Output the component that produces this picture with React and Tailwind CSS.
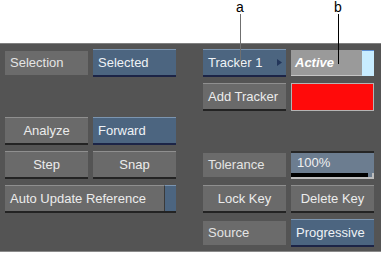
const font = { fontFamily: '"Liberation Sans", Arial, sans-serif' };

function Label({ children, className = "" }) {
  return (
    <div
      className={`my-[2px] flex items-center bg-[#6b6b6b] pl-[5px] text-[13px] text-[#e4e4e4] ${className}`}
    >
      {children}
    </div>
  );
}

function GrayBtn({ children, center = true, className = "" }) {
  return (
    <div
      className={`flex items-center border-t border-t-[#8f8f8f] border-b-2 border-b-[#232323] bg-[#6a6a6a] text-[13px] text-[#ececec] ${
        center ? "justify-center" : "pl-[5px]"
      } ${className}`}
    >
      {children}
    </div>
  );
}

function BlueBtn({ children, className = "" }) {
  return (
    <div
      className={`flex items-center border-t border-t-[#7c95b0] border-b-2 border-b-[#1c2446] bg-[#4c6580] pl-[5px] text-[13px] text-[#eef2f6] ${className}`}
    >
      {children}
    </div>
  );
}

export default function App() {
  return (
    <div className="relative h-[253px] w-[381px] overflow-hidden bg-white" style={font}>
      {/* callouts */}
      <div className="absolute left-[236px] top-0 text-[14px] leading-[14px] text-black">a</div>
      <div className="absolute left-[240px] top-[14px] z-10 h-[53px] w-px bg-[#6f6f6f]" />
      <div className="absolute left-[334px] top-0 text-[14px] leading-[14px] text-black">b</div>
      <div className="absolute left-[338px] top-[14px] z-10 h-[50px] w-px bg-black" />

      <div className="h-[43px]" />
      <div className="flex h-[209px] gap-[27px] border-t border-t-[#808080] border-b border-b-[#8a8a8a] bg-[#545454] pl-[5px] pt-[5px]">
        {/* left column */}
        <div className="grid grid-cols-[83px_83px] grid-rows-[repeat(6,28px)] gap-x-[5px] gap-y-[6px]">
          <Label>Selection</Label>
          <BlueBtn>Selected</BlueBtn>
          <div className="col-span-2" />
          <GrayBtn>Analyze</GrayBtn>
          <BlueBtn>Forward</BlueBtn>
          <GrayBtn>Step</GrayBtn>
          <GrayBtn>Snap</GrayBtn>
          <div className="col-span-2 flex border-b-2 border-b-[#232323]">
            <div className="flex flex-1 items-center border-t border-t-[#8f8f8f] bg-[#6a6a6a] pl-[5px] text-[13px] text-[#ececec]">
              Auto Update Reference
            </div>
            <div className="w-[12px] border-t border-t-[#7c95b0] border-l border-l-[#3a3a3a] bg-[#4c6580]" />
          </div>
        </div>

        {/* right column */}
        <div className="grid grid-cols-[83px_83px] grid-rows-[repeat(6,28px)] gap-x-[5px] gap-y-[6px]">
          <BlueBtn className="justify-between pr-[4px]">
            <span>Tracker 1</span>
            <svg width="5" height="7" viewBox="0 0 5 7">
              <path d="M0 0 L5 3.5 L0 7 Z" fill="#23365a" />
            </svg>
          </BlueBtn>
          <div className="my-[1px] flex">
            <div className="flex flex-1 items-center border-b border-b-[#c4c4c4] bg-[#9a9a9a] pl-[4px] text-[13px] font-bold italic text-white">
              Active
            </div>
            <div className="w-[12px] border-t border-t-[#5d8fd3] bg-[#c8ecff]" />
          </div>
          <GrayBtn center={false}>Add Tracker</GrayBtn>
          <div className="border border-[#b4b4b4] bg-[#ff0a0a]" />
          <div className="col-span-2" />
          <Label>Tolerance</Label>
          <div className="flex flex-col border-t-2 border-t-[#262626] bg-[#6c7d90]">
            <div className="flex flex-1 items-center pl-[6px] text-[13px] text-[#f0f0f0]">100%</div>
            <div className="flex h-[8px] border-b-2 border-b-[#bdbdbd]">
              <div className="flex-1 bg-black" />
              <div className="w-[6px] bg-[#6c7d90] border-r-2 border-r-[#bdbdbd]" />
            </div>
          </div>
          <GrayBtn>Lock Key</GrayBtn>
          <GrayBtn>Delete Key</GrayBtn>
          <Label>Source</Label>
          <BlueBtn>Progressive</BlueBtn>
        </div>
      </div>
    </div>
  );
}
